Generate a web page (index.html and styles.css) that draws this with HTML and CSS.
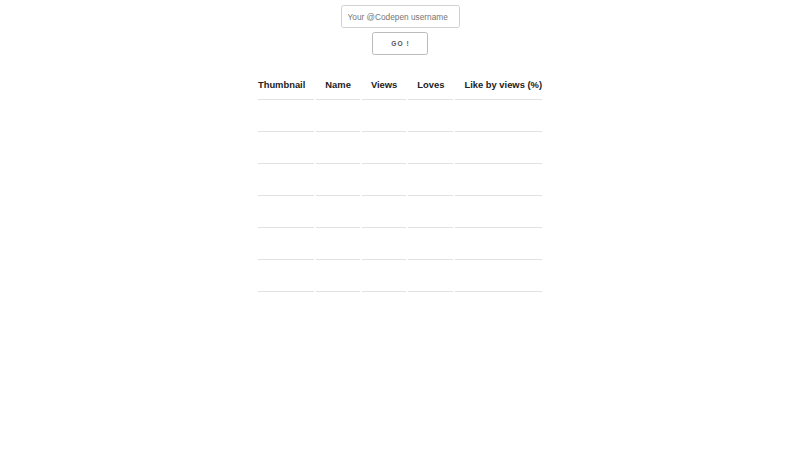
FILE: index.html
```html
<!DOCTYPE html>
<html lang="en">
<head>
<meta charset="utf-8">
<title>Codepen stats</title>
<link rel="stylesheet" href="styles.css">
</head>
<body>
<main class="page">
  <form class="search">
    <input class="search-input" type="text" placeholder="Your @Codepen username">
    <button class="search-button" type="button">Go !</button>
  </form>
  <table class="stats">
    <thead>
      <tr><th>Thumbnail</th><th>Name</th><th>Views</th><th>Loves</th><th>Like by views (%)</th></tr>
    </thead>
    <tbody>
      <tr><td></td><td></td><td></td><td></td><td></td></tr>
      <tr><td></td><td></td><td></td><td></td><td></td></tr>
      <tr><td></td><td></td><td></td><td></td><td></td></tr>
      <tr><td></td><td></td><td></td><td></td><td></td></tr>
      <tr><td></td><td></td><td></td><td></td><td></td></tr>
      <tr><td></td><td></td><td></td><td></td><td></td></tr>
    </tbody>
  </table>
</main>
</body>
</html>
```
FILE: styles.css
```css
html, body {
  margin: 0;
  padding: 0;
  background: #fff;
}
body {
  font-family: "Liberation Sans", Arial, sans-serif;
  color: #222;
}
.page {
  display: flex;
  flex-direction: column;
  align-items: center;
  padding-top: 5px;
}
.search {
  display: flex;
  flex-direction: column;
  align-items: center;
  gap: 4px;
  margin: 0;
}
.search-input {
  box-sizing: border-box;
  width: 119px;
  height: 23px;
  padding: 0 6px;
  border: 1px solid #d1d1d1;
  border-radius: 2.5px;
  font-family: "Liberation Sans", Arial, sans-serif;
  font-size: 8.3px;
  color: #222;
  outline: none;
  background: #fff;
}
.search-input::placeholder {
  color: #757575;
}
.search-button {
  box-sizing: border-box;
  height: 23px;
  padding: 0 17px 0 18px;
  border: 1px solid #bbb;
  border-radius: 2.5px;
  background: transparent;
  color: #555;
  font-family: "Liberation Sans", Arial, sans-serif;
  font-size: 6.6px;
  font-weight: bold;
  letter-spacing: 1px;
  text-transform: uppercase;
  cursor: pointer;
}
.stats {
  margin-top: 13px;
  border-collapse: separate;
  border-spacing: 2px;
  margin-left: -2px;
  margin-right: -2px;
}
.stats th,
.stats td {
  box-sizing: border-box;
  height: 30px;
  padding: 0 9px;
  border-bottom: 1px solid #e1e1e1;
  text-align: left;
  font-size: 9.4px;
}
.stats th {
  font-weight: bold;
  color: #222;
  padding-bottom: 1px;
}
.stats th:first-child,
.stats td:first-child {
  padding-left: 0;
}
.stats th:last-child,
.stats td:last-child {
  padding-right: 0;
}
```
